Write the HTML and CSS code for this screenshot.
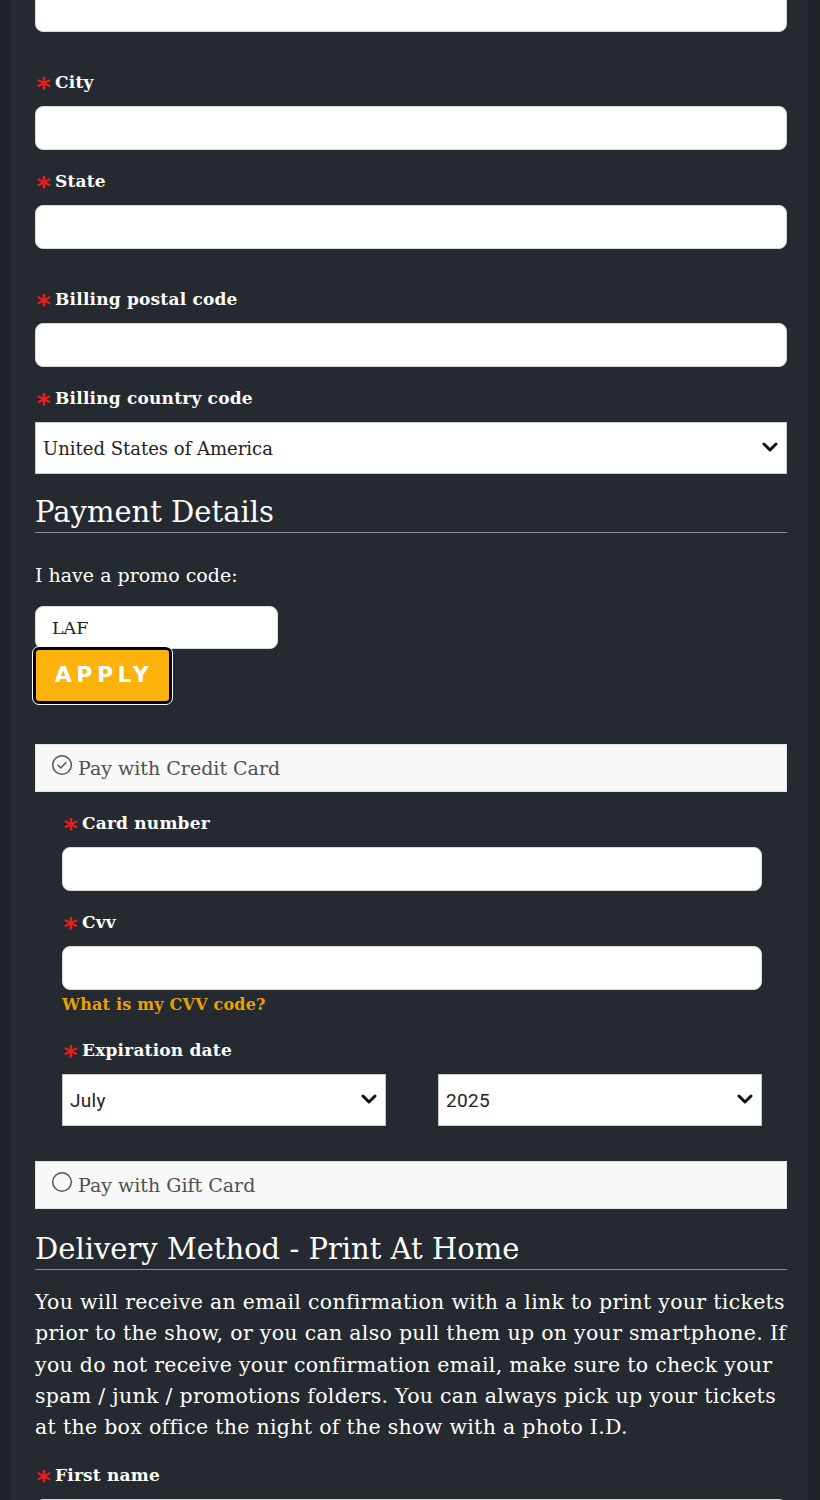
FILE: index.html
```html
<!DOCTYPE html>
<html lang="en">
<head>
<meta charset="utf-8">
<title>Checkout</title>
<link rel="stylesheet" href="styles.css">
</head>
<body>
<div class="page">
  <div class="field first">
    <input class="text-input" type="text">
  </div>

  <div class="field spaced">
    <label class="label"><span class="req">*</span>City</label>
    <input class="text-input" type="text">
  </div>

  <div class="field">
    <label class="label"><span class="req">*</span>State</label>
    <input class="text-input" type="text">
  </div>

  <div class="field spaced">
    <label class="label"><span class="req">*</span>Billing postal code</label>
    <input class="text-input" type="text">
  </div>

  <div class="field">
    <label class="label"><span class="req">*</span>Billing country code</label>
    <div class="select-wrap">
      <select class="select serif-select"><option>United States of America</option></select>
      <svg class="chevron" viewBox="0 0 16 10" width="16" height="10"><path d="M2 2 L8 8 L14 2" fill="none" stroke="#111" stroke-width="3" stroke-linecap="round" stroke-linejoin="round"/></svg>
    </div>
  </div>

  <h2 class="section-title payment-title">Payment Details</h2>

  <p class="promo-label">I have a promo code:</p>
  <input class="promo-input" type="text" value="LAF">
  <button class="apply-btn">APPLY</button>

  <div class="pay-option first-option">
    <svg class="opt-icon" viewBox="0 0 22 22" width="22" height="22"><circle cx="11" cy="11" r="9.3" fill="none" stroke="#555" stroke-width="1.5"/><path d="M7 11.3 L9.8 14 L15 8.6" fill="none" stroke="#555" stroke-width="1.5" stroke-linecap="round" stroke-linejoin="round"/></svg>
    <span class="opt-text">Pay with Credit Card</span>
  </div>

  <div class="card-section">
    <div class="field card-first">
      <label class="label"><span class="req">*</span>Card number</label>
      <input class="text-input" type="text">
    </div>
    <div class="field">
      <label class="label"><span class="req">*</span>Cvv</label>
      <input class="text-input" type="text">
      <a class="cvv-link">What is my CVV code?</a>
    </div>
    <div class="field exp-field">
      <label class="label"><span class="req">*</span>Expiration date</label>
      <div class="exp-row">
        <div class="select-wrap">
          <select class="select sans-select"><option>July</option></select>
          <svg class="chevron" viewBox="0 0 16 10" width="16" height="10"><path d="M2 2 L8 8 L14 2" fill="none" stroke="#111" stroke-width="3" stroke-linecap="round" stroke-linejoin="round"/></svg>
        </div>
        <div class="select-wrap">
          <select class="select sans-select"><option>2025</option></select>
          <svg class="chevron" viewBox="0 0 16 10" width="16" height="10"><path d="M2 2 L8 8 L14 2" fill="none" stroke="#111" stroke-width="3" stroke-linecap="round" stroke-linejoin="round"/></svg>
        </div>
      </div>
    </div>
  </div>

  <div class="pay-option gift-option">
    <svg class="opt-icon" viewBox="0 0 22 22" width="22" height="22"><circle cx="11" cy="11" r="9.3" fill="none" stroke="#555" stroke-width="1.5"/></svg>
    <span class="opt-text">Pay with Gift Card</span>
  </div>

  <h2 class="section-title delivery-title">Delivery Method - Print At Home</h2>
  <p class="delivery-text">You will receive an email confirmation with a link to print your tickets prior to the show, or you can also pull them up on your smartphone. If you do not receive your confirmation email, make sure to check your spam / junk / promotions folders. You can always pick up your tickets at the box office the night of the show with a photo I.D.</p>

  <div class="field last">
    <label class="label"><span class="req">*</span>First name</label>
    <input class="text-input" type="text">
  </div>
</div>
</body>
</html>
```

FILE: styles.css
```css
* { box-sizing: border-box; }

html, body {
  margin: 0;
  padding: 0;
  background: #1f2328;
}

body {
  font-family: "DejaVu Serif", "Liberation Serif", serif;
  color: #ffffff;
  height: 1500px;
  overflow: hidden;
}

.page {
  margin-left: 10px;
  width: 798px;
  min-height: 1500px;
  background: #252a31;
  padding: 0 21px 0 25px;
  display: flex;
  flex-direction: column;
}

.field {
  display: flex;
  flex-direction: column;
  margin-top: 19px;
}

.field.first { margin-top: -12px; }
.field.spaced { margin-top: 38px; }
.field.last { margin-top: 20px; }

.label {
  display: flex;
  align-items: center;
  height: 24px;
  font-weight: bold;
  font-size: 17px;
  line-height: 24px;
  letter-spacing: 0.2px;
  color: #ffffff;
  margin-bottom: 12px;
}

.req {
  color: #ec1c1c;
  font-family: "DejaVu Sans", sans-serif;
  font-weight: bold;
  font-size: 27px;
  line-height: 24px;
  width: 17px;
  text-align: center;
  margin-right: 3px;
  transform: translateY(6px);
  letter-spacing: 0;
}

.text-input {
  height: 44px;
  width: 100%;
  border: 1px solid #d8d8d8;
  border-radius: 8px;
  background: #ffffff;
  font-family: inherit;
  font-size: 16px;
  padding: 0 16px;
}

.select-wrap {
  position: relative;
  width: 100%;
}

.select {
  appearance: none;
  -webkit-appearance: none;
  width: 100%;
  height: 52px;
  border: 1px solid #c8c8c8;
  border-radius: 0;
  background: #ffffff;
  color: #222;
  padding: 0 7px;
  margin: 0;
}

.serif-select {
  font-family: "DejaVu Serif", serif;
  font-size: 18px;
  letter-spacing: 0;
}

.sans-select {
  font-family: Roboto, "Liberation Sans", sans-serif;
  font-size: 19px;
  letter-spacing: 0.3px;
  height: 52px;
}

.chevron {
  position: absolute;
  right: 9px;
  top: 50%;
  margin-top: -6px;
  pointer-events: none;
}

.section-title {
  font-weight: normal;
  font-size: 29px;
  line-height: 36px;
  margin: 0;
  padding-bottom: 2px;
  border-bottom: 1px solid #8a8d91;
  letter-spacing: 0;
}

.payment-title { margin-top: 20px; }

.promo-label {
  font-size: 19px;
  line-height: 24px;
  margin: 30px 0 0;
  letter-spacing: 0;
}

.promo-input {
  margin-top: 19px;
  width: 243px;
  height: 43px;
  border: 1px solid #d8d8d8;
  border-radius: 8px;
  background: #ffffff;
  font-family: "DejaVu Serif", serif;
  font-size: 17.5px;
  color: #222;
  padding: 0 16px;
}

.apply-btn {
  align-self: flex-start;
  margin: -2px 0 0 -2px;
  width: 139px;
  height: 57px;
  background: #fbb20b;
  border: 3px solid #000;
  outline: 1px solid #fff;
  outline-offset: 0;
  border-radius: 6px;
  color: #ffffff;
  font-family: "DejaVu Sans", sans-serif;
  font-weight: bold;
  font-size: 22px;
  letter-spacing: 4.5px;
  padding: 0 0 3px 3px;
}

.pay-option {
  display: flex;
  align-items: center;
  height: 48px;
  background: #f8f8f8;
  border: 1px solid #e2e2e2;
  padding-left: 15px;
  margin-top: 40px;
}

.gift-option { margin-top: 35px; }

.opt-icon { margin-right: 5px; position: relative; top: -3px; }

.opt-text {
  color: #505050;
  font-size: 19px;
  letter-spacing: 0;
}

.card-section {
  padding: 0 25px 0 27px;
  display: flex;
  flex-direction: column;
}

.card-first { margin-top: 19px; }

.cvv-link {
  color: #e8a300;
  font-weight: bold;
  font-size: 16px;
  letter-spacing: 0.2px;
  line-height: 24px;
  margin-top: 3px;
}

.exp-field { margin-top: 21px; }

.exp-row {
  display: grid;
  grid-template-columns: 1fr 1fr;
  column-gap: 52px;
}

.delivery-title { margin-top: 22px; }

.delivery-text {
  margin: 17px 0 0;
  font-size: 20.5px;
  line-height: 31.3px;
  letter-spacing: 0.3px;
}
```
